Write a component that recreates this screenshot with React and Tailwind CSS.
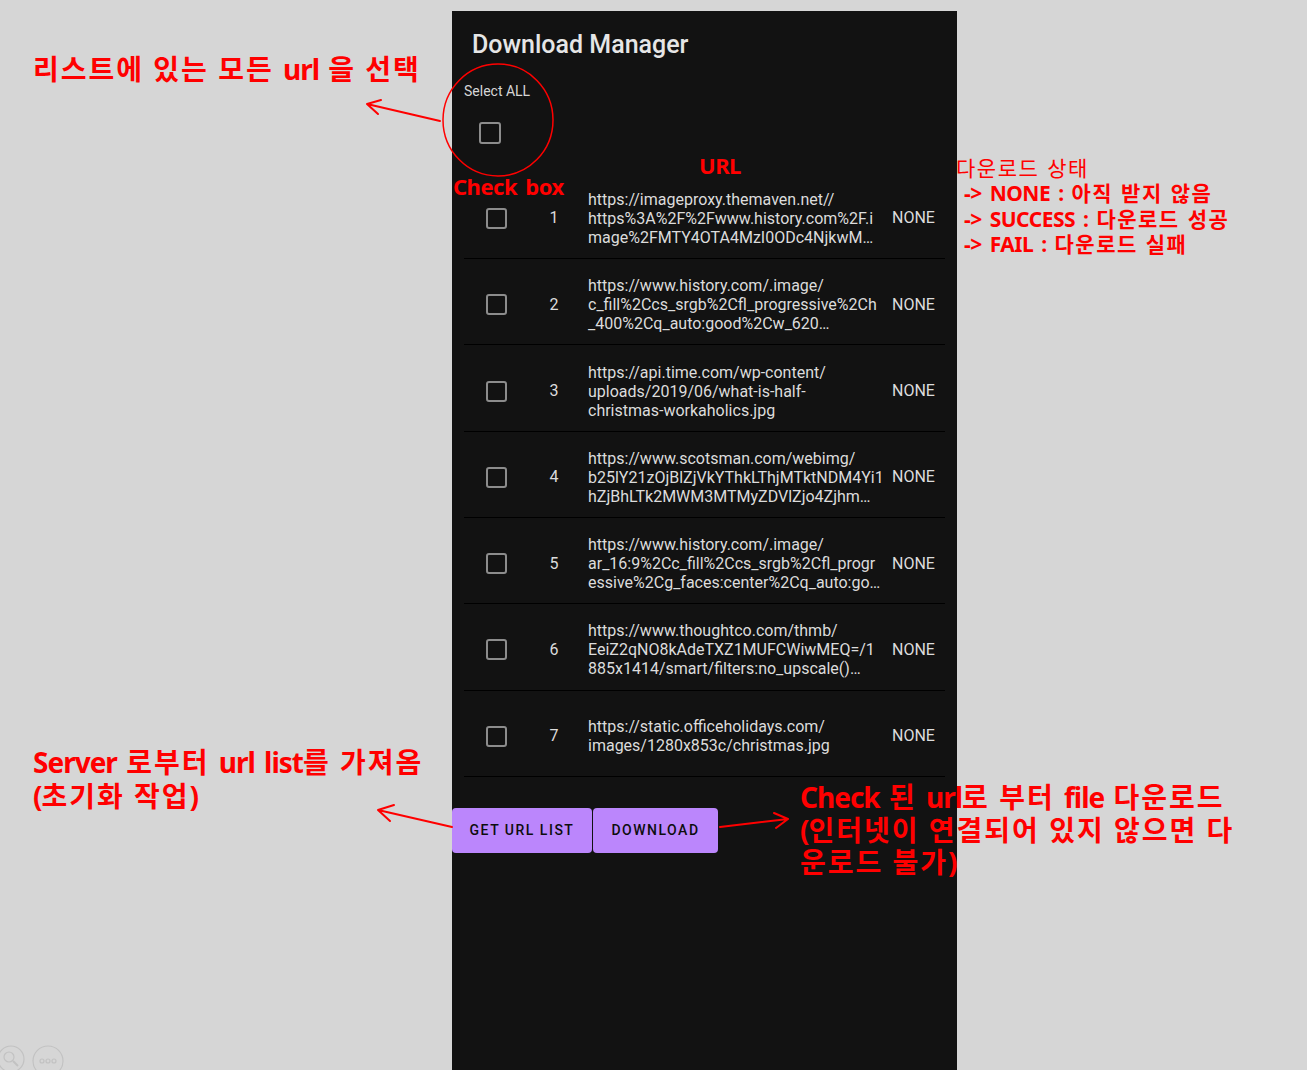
const urls = [
  [
    'https://imageproxy.themaven.net//',
    'https%3A%2F%2Fwww.history.com%2F.i',
    'mage%2FMTY4OTA4MzI0ODc4NjkwM…',
  ],
  [
    'https://www.history.com/.image/',
    'c_fill%2Ccs_srgb%2Cfl_progressive%2Ch',
    '_400%2Cq_auto:good%2Cw_620…',
  ],
  [
    'https://api.time.com/wp-content/',
    'uploads/2019/06/what-is-half-',
    'christmas-workaholics.jpg',
  ],
  [
    'https://www.scotsman.com/webimg/',
    'b25lY21zOjBlZjVkYThkLThjMTktNDM4Yi1',
    'hZjBhLTk2MWM3MTMyZDVlZjo4Zjhm…',
  ],
  [
    'https://www.history.com/.image/',
    'ar_16:9%2Cc_fill%2Ccs_srgb%2Cfl_progr',
    'essive%2Cg_faces:center%2Cq_auto:go…',
  ],
  [
    'https://www.thoughtco.com/thmb/',
    'EeiZ2qNO8kAdeTXZ1MUFCWiwMEQ=/1',
    '885x1414/smart/filters:no_upscale()…',
  ],
  [
    'https://static.officeholidays.com/',
    'images/1280x853c/christmas.jpg',
  ],
];

// empty material-style checkbox
const Box = () => (
  <div className="w-[21px] h-[21px] shrink-0 border-2 border-[#8c8c8c] rounded-[3px]" />
);

const UrlRow = ({ index, lines }) => (
  <div className="h-[86.33px] pt-[6px] border-b border-black flex items-center pl-[22px]">
    <Box />
    <span className="w-[30px] ml-[32px] text-center text-[16px] text-[#dcdcdc]">{index}</span>
    <div className="ml-[19px] w-[293px] text-[16px] leading-[19px] text-[#dcdcdc]">
      {lines.map((l) => (
        <div key={l} className="whitespace-nowrap">{l}</div>
      ))}
    </div>
    <span className="ml-[11px] text-[16px] text-[#dcdcdc]">NONE</span>
  </div>
);

// the original notes were typed in a wider korean face, so widen hangul runs a bit
const HANGUL = { lg: 'inline-block tracking-[2px]', md: 'inline-block tracking-[1.5px]' };
const LATIN = { lg: 'inline-block tracking-[-1px]', md: 'inline-block tracking-[-0.5px]' };

const Ko = ({ text, size }) =>
  text.split(/([가-힣]+)/).map((part, i) =>
    part === '' ? null : (
      <span key={i} className={/[가-힣]/.test(part) ? HANGUL[size] : LATIN[size]}>
        {part}
      </span>
    )
  );

// red notes drawn over the screenshot
const Note = ({ className, lines, size = 'lg', boldFrom = 0 }) => (
  <div
    className={`absolute whitespace-pre [word-spacing:3px] font-['Noto_Sans','Noto_Sans_CJK_KR',sans-serif] text-[#ff0000] ${className}`}
  >
    {lines.map((l, i) => (
      <div key={i} className={i >= boldFrom ? 'font-bold' : 'font-normal'}>
        <Ko text={l} size={size} />
      </div>
    ))}
  </div>
);

export default function App() {
  return (
    <div className="relative w-[1307px] h-[1070px] overflow-hidden bg-[#d6d6d6] font-['Roboto',sans-serif]">
      <div className="ml-[452px] pt-[11px]">
        <div className="w-[505px] h-[1059px] bg-[#121212]">
          <h1 className="pt-[21px] pl-[20px] text-[25px] leading-[26px] font-medium text-[#e6e6e6]">
            Download Manager
          </h1>
          <div className="mt-[26px] pl-[12px] text-[14px] leading-[15px] text-[#d6d6d6]">Select ALL</div>
          <div className="mt-[23px] ml-[27px] w-[22px] h-[22px] border-2 border-[#8c8c8c] rounded-[3px]" />

          <div className="mt-[28.7px] mx-[12px]">
            {urls.map((lines, i) => (
              <UrlRow key={i} index={i + 1} lines={lines} />
            ))}
          </div>

          <div className="mt-[31px] flex gap-[1px]">
            <button className="w-[140px] h-[45px] rounded-[4px] bg-[#bb86fc] text-[14px] font-medium tracking-[1.5px] text-[#0d0d0d]">
              GET URL LIST
            </button>
            <button className="w-[125px] h-[45px] rounded-[4px] bg-[#bb86fc] text-[14px] font-medium tracking-[1.5px] text-[#0d0d0d]">
              DOWNLOAD
            </button>
          </div>
        </div>
      </div>

      {/* annotations */}
      <svg className="absolute left-0 top-0 pointer-events-none" width="1307" height="1070">
        <ellipse cx="498" cy="120" rx="55" ry="56" fill="none" stroke="#ff0000" strokeWidth="1.5" />
        <g stroke="#ff0000" strokeWidth="2" fill="none" strokeLinecap="round">
          <path d="M440 121 L367 104 M367 104 L381 100 M367 104 L378 114" />
          <path d="M452 827 L378 810 M378 810 L394 805 M378 810 L390 821" />
          <path d="M720 827 L788 819 M788 819 L774 813 M788 819 L776 828" />
        </g>
        <g stroke="#c2c2c2" strokeWidth="1.2" fill="none">
          <circle cx="11" cy="1059" r="13" />
          <circle cx="9" cy="1057" r="5" />
          <path d="M13 1061 L18 1066" strokeWidth="2" />
          <circle cx="48" cy="1061" r="15" />
          <circle cx="42" cy="1061" r="2" />
          <circle cx="48" cy="1061" r="2" />
          <circle cx="54" cy="1061" r="2" />
        </g>
      </svg>

      <Note className="left-[33px] top-[55px] text-[28px] leading-[28px]" lines={['리스트에 있는 모든 url 을 선택']} />
      <Note className="left-[699px] top-[154px] text-[22px] leading-[22px]" size="md" lines={['URL']} />
      <Note className="left-[453px] top-[175px] text-[22px] leading-[22px]" size="md" lines={['Check box']} />
      <Note
        className="left-[956px] top-[156px] text-[21px] leading-[25.3px]"
        size="md"
        boldFrom={1}
        lines={['다운로드 상태', ' -> NONE : 아직 받지 않음', ' -> SUCCESS : 다운로드 성공', ' -> FAIL : 다운로드 실패']}
      />
      <Note
        className="left-[33px] top-[746px] text-[28px] leading-[33.5px]"
        lines={['Server 로부터 url list를 가져옴', '(초기화 작업)']}
      />
      <Note
        className="left-[800px] top-[781px] text-[28px] leading-[32.5px]"
        lines={['Check 된 url로 부터 file 다운로드', '(인터넷이 연결되어 있지 않으면 다', '운로드 불가)']}
      />
    </div>
  );
}
